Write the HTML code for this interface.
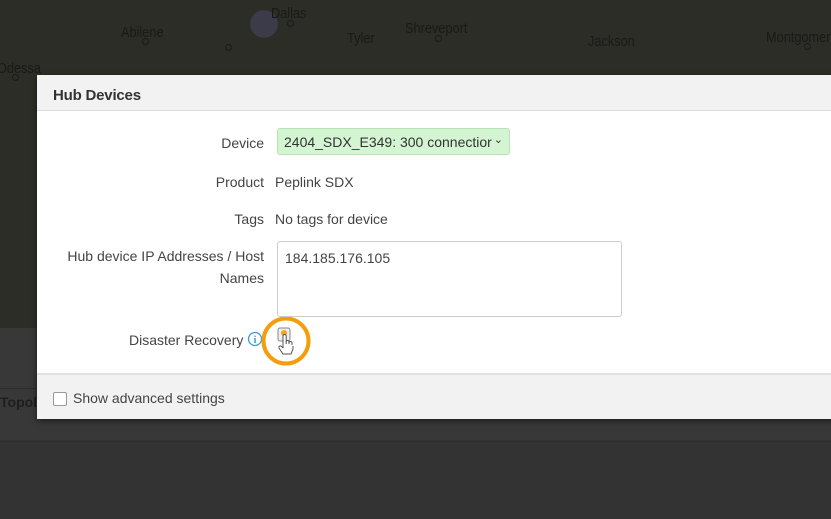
<!DOCTYPE html>
<html><head><meta charset="utf-8"><style>
*{box-sizing:border-box;margin:0;padding:0}
body{width:831px;height:519px;overflow:hidden;background:#333;font-family:"Liberation Sans",Arial,sans-serif;position:relative}
.map{position:absolute;left:0;top:0;width:831px;height:328px;background:#2b2d26}
.band{position:absolute;left:0;top:328px;width:831px;height:112px;background:#383838}
.band .l1{position:absolute;left:0;top:60px;width:40px;height:1px;background:#2c2c2c}
.band .l2{position:absolute;left:0;top:113px;width:831px;height:1px;background:#2f2f2f}
.lbl{position:absolute;color:#191a17;font-size:15px;transform:scaleX(.85);transform-origin:left}
.dot{position:absolute;width:7px;height:7px;border:1.5px solid #1a1a18;border-radius:50%}
.modal{position:absolute;left:37px;top:75px;width:800px;height:344px;background:#fff;box-shadow:0 2px 6px rgba(0,0,0,.5)}
.hdr{height:36px;background:#f2f2f2;border-bottom:1px solid #ddd;padding:12px 0 0 16px;font-size:15px;font-weight:bold;color:#333;letter-spacing:-.2px}
.row{position:absolute;font-size:14px;color:#444}
.r{text-align:right;width:227px;left:0}
.sel{position:absolute;left:240px;top:53px;width:233px;height:27px;background:#d4f5d2;border:1px solid #b9e3b6;border-radius:3px;font-size:14px;color:#333;padding:5px 0 0 6px;white-space:nowrap;overflow:hidden}
.ta{position:absolute;left:240px;top:166px;width:345px;height:76px;border:1px solid #ccc;border-radius:3px;font-size:14px;color:#444;padding:8px 7px}
.ftr{position:absolute;left:0;top:298px;width:800px;height:46px;background:#f2f2f2;border-top:2px solid #e2e2e2}
.cb{position:absolute;left:16px;top:17px;width:14px;height:14px;border:1px solid #999;border-radius:2px;background:#fff}
</style></head><body>
<div class="map">
<div class="lbl" style="left:121px;top:24px">Abilene</div><div class="dot" style="left:142px;top:38px"></div>
<div style="position:absolute;left:250px;top:10px;width:28px;height:28px;border-radius:50%;background:#3b3b4a"></div>
<div class="lbl" style="left:271px;top:5px">Dallas</div><div class="dot" style="left:287px;top:20px"></div>
<div class="lbl" style="left:347px;top:30px">Tyler</div><div class="dot" style="left:225px;top:44px"></div>
<div class="lbl" style="left:405px;top:20px">Shreveport</div><div class="dot" style="left:435px;top:35px"></div>
<div class="lbl" style="left:588px;top:33px">Jackson</div><div class="dot" style="left:384px;top:46px;display:none"></div>
<div class="lbl" style="left:766px;top:29px">Montgomery</div><div class="dot" style="left:804px;top:43px"></div>
<div class="lbl" style="left:-3px;top:60px">Odessa</div><div class="dot" style="left:12px;top:74px"></div>
</div>
<div class="band"><div class="l1"></div><div class="l2"></div>
<div style="position:absolute;left:0;top:66px;font-size:14px;font-weight:bold;color:#1e1e1e">Topol</div></div>
<div class="modal">
<div class="hdr">Hub Devices</div>
<div class="row r" style="top:60px">Device</div>
<div class="sel">2404_SDX_E349: 300 connectior <span style="position:absolute;right:6px;top:4px;font-size:11px">&#8964;</span></div>
<div class="row r" style="top:99px">Product</div><div class="row" style="left:238px;top:99px">Peplink SDX</div>
<div class="row r" style="top:136px">Tags</div><div class="row" style="left:238px;top:136px">No tags for device</div>
<div class="row r" style="top:170px;line-height:22px">Hub device IP Addresses / Host<br>Names</div>
<div class="ta">184.185.176.105</div>
<div class="row" style="left:92px;top:257px">Disaster Recovery</div>
<svg style="position:absolute;left:210px;top:256px" width="16" height="16"><circle cx="8" cy="8" r="6.5" fill="none" stroke="#3a9ad9" stroke-width="1.3"/><text x="8" y="12" font-size="10" font-weight="bold" text-anchor="middle" fill="#3a9ad9" font-family="Liberation Serif">i</text></svg>
<svg style="position:absolute;left:222px;top:242px" width="56" height="54">
<rect x="19" y="11" width="12" height="13" rx="2" fill="#eee" stroke="#888" stroke-width="1"/>
<circle cx="25" cy="16" r="3" fill="#f5a623"/>
<path d="M24 31 v-12 a1.6 1.6 0 0 1 3.2 0 v8 M27 25 a1.5 1.5 0 0 1 3 0 v2 M30 26 a1.5 1.5 0 0 1 3 0 v2 M24 31 l-2-2 a1.5 1.5 0 0 0 -2 2 l4 6 h8 l2-5 v-3" fill="#fff" stroke="#555" stroke-width="1"/>
<circle cx="27" cy="24" r="22.5" fill="none" stroke="#f59e0b" stroke-width="4"/>
</svg>
<div class="ftr"><div class="cb"></div><div class="row" style="left:36px;top:15px">Show advanced settings</div></div>
</div>
</body></html>
